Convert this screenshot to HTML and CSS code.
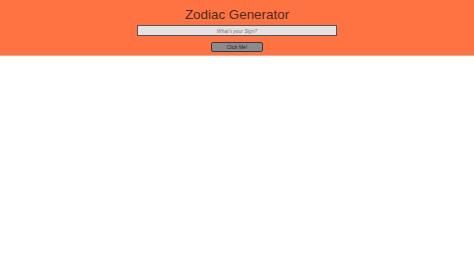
FILE: index.html
```html
<!DOCTYPE html>
<html>
<head>
<meta charset="utf-8">
<link rel="stylesheet" href="styles.css">
</head>
<body>
<header class="top">
  <h1 class="title">Zodiac Generator</h1>
  <input class="sign" type="text" placeholder="What's your Sign?">
  <button class="go">Click Me!</button>
</header>
</body>
</html>
```
FILE: styles.css
```css
html, body { margin: 0; padding: 0; background: #fff; }
body { font-family: "Liberation Sans", Arial, sans-serif; }
.top {
  background: #ff7342;
  height: 56px;
  display: flex;
  flex-direction: column;
  align-items: center;
  box-sizing: border-box;
  padding-top: 7px;
  border-bottom: 1px solid #f0a48a;
}
.title {
  margin: 0;
  font-size: 13.4px;
  font-weight: normal;
  line-height: 15px;
  color: #4a2c22;
}
.sign {
  margin-top: 3px;
  width: 200px;
  height: 11px;
  box-sizing: border-box;
  border: 1px solid #555;
  background: #e2e2e2;
  font-family: "Liberation Sans", Arial, sans-serif;
  font-size: 5px;
  text-align: center;
  padding: 0;
  outline: none;
}
.sign::placeholder { color: #777; font-style: italic; }
.go {
  margin-top: 6px;
  width: 52px;
  height: 10px;
  box-sizing: border-box;
  border: 1px solid #3a3a3a;
  border-radius: 2px;
  background: #8a8a90;
  font-family: "Liberation Sans", Arial, sans-serif;
  font-size: 5px;
  color: #222;
  padding: 0;
  line-height: 8px;
}
```
